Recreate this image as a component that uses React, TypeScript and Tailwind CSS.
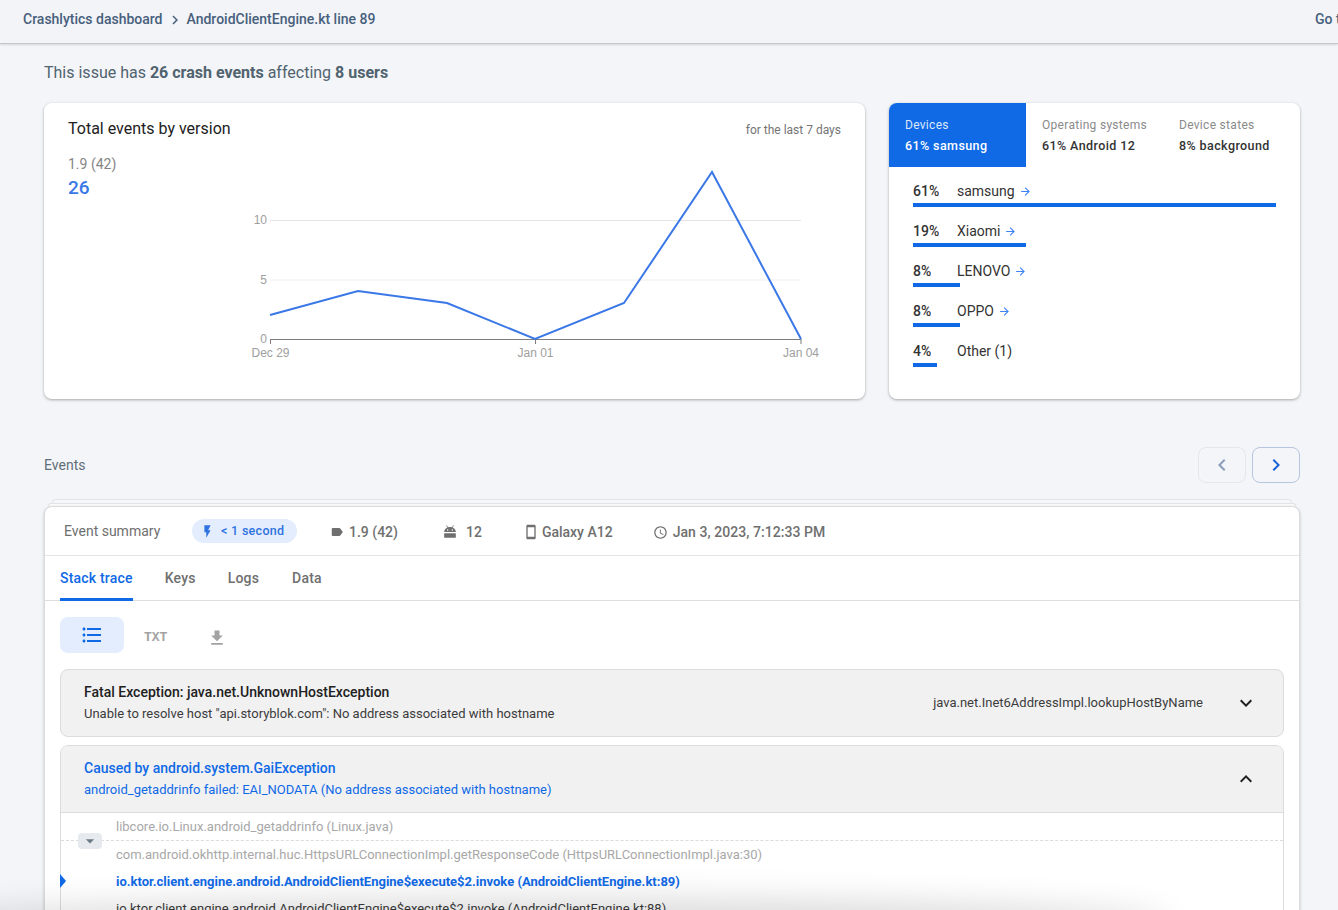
import {
  MdAccessTime,
  MdArrowDropDown,
  MdArrowForward,
  MdChevronLeft,
  MdChevronRight,
  MdExpandLess,
  MdExpandMore,
  MdFileDownload,
  MdFlashOn,
  MdFormatListBulleted,
  MdLabel,
  MdOutlineSmartphone,
} from "react-icons/md";

const deviceRows = [
  { pct: "61%", name: "samsung", width: "w-[363px]", link: true },
  { pct: "19%", name: "Xiaomi", width: "w-[113px]", link: true },
  { pct: "8%", name: "LENOVO", width: "w-[47px]", link: true },
  { pct: "8%", name: "OPPO", width: "w-[47px]", link: true },
  { pct: "4%", name: "Other (1)", width: "w-[24px]", link: false },
];

const points = "270,315 358,291 447,303 535,339 624,303 712,172 801,339";

const Chart = () => (
  <svg width="600" height="210" viewBox="230 160 600 210" className="block shrink-0">
    <line x1="270" x2="801" y1="220.5" y2="220.5" stroke="#e4e4e4" />
    <line x1="270" x2="801" y1="280" y2="280" stroke="#eeeeee" />
    <line x1="270" x2="801" y1="339.5" y2="339.5" stroke="#7d7d7d" />
    <line x1="270.5" x2="270.5" y1="339" y2="344" stroke="#7d7d7d" />
    <line x1="535.5" x2="535.5" y1="339" y2="344" stroke="#7d7d7d" />
    <line x1="801" x2="801" y1="339" y2="344" stroke="#7d7d7d" />
    <polyline points={points} fill="none" stroke="#3b78e7" strokeWidth="2" />
    <g fontSize="12" fill="#9e9e9e" fontFamily="'Liberation Sans', sans-serif">
      <text x="267" y="224" textAnchor="end">10</text>
      <text x="267" y="284" textAnchor="end">5</text>
      <text x="267" y="343" textAnchor="end">0</text>
      <text x="270.5" y="357" textAnchor="middle">Dec 29</text>
      <text x="535.5" y="357" textAnchor="middle">Jan 01</text>
      <text x="801" y="357" textAnchor="middle">Jan 04</text>
    </g>
  </svg>
);

const AndroidIcon = () => (
  <svg width="14" height="14" viewBox="0 0 24 24" className="mr-[9px]" fill="currentColor">
    <path d="M2 12a10 8.5 0 0 1 20 0z" />
    <path d="M6 1l3 4M18 1l-3 4" stroke="currentColor" strokeWidth="1.6" />
    <circle cx="8" cy="8.5" r="1.3" fill="#fff" />
    <circle cx="16" cy="8.5" r="1.3" fill="#fff" />
    <rect x="2" y="14" width="20" height="8" rx="1" />
  </svg>
);

const DeviceTab = ({ label, value, active }: { label: string; value: string; active?: boolean }) => (
  <div className={`w-[137px] h-16 pl-4 pt-[15px] ${active ? "bg-[#1069e5] text-white" : "text-[#333]"}`}>
    <div className={`text-[12px] leading-[15px] tracking-[0.3px] ${active ? "text-[#dbe8fb]" : "text-[#8a8a8a]"}`}>{label}</div>
    <div className="mt-[5px] text-[12.5px] leading-[16px] font-medium tracking-[0.4px]">{value}</div>
  </div>
);

const Meta = ({ icon, text, className }: { icon: React.ReactNode; text: string; className: string }) => (
  <div className={`flex items-center pt-[2px] text-[14px] text-[#6f6f6f] font-medium ${className}`}>
    {icon}
    <span>{text}</span>
  </div>
);

const StackLine = ({ text, className }: { text: string; className: string }) => (
  <div className={`pl-[55px] text-[13px] whitespace-nowrap ${className}`}>{text}</div>
);

export default function App() {
  return (
    <div className="relative h-[910px] w-[1338px] overflow-hidden bg-[#f4f5f8] font-['Roboto',sans-serif]">
      <header className="flex h-[44px] items-center justify-between border-b border-[#c4c6ca] bg-[#f3f4f7] pb-[4px] pl-[23px] shadow-[0_1px_2px_rgba(0,0,0,0.12)]">
        <div className="flex items-center text-[14px] font-medium text-[#47607c]">
          <span>Crashlytics dashboard</span>
          <MdChevronRight className="mx-[3px] text-[#47607c]" size={18} />
          <span>AndroidClientEngine.kt line 89</span>
        </div>
        <span className="w-[23px] overflow-hidden whitespace-nowrap text-[14px] font-medium text-[#47607c]">Go to</span>
      </header>

      <main className="pl-[44px] pr-[38px]">
        <p className="mt-[19px] text-[16px] leading-[20px] text-[#50636f]">
          This issue has <b className="font-bold">26 crash events</b> affecting <b className="font-bold">8 users</b>
        </p>

        <section className="mt-[20px] flex gap-[24px]">
          <div className="h-[296px] w-[821px] rounded-lg bg-white pl-6 pr-6 shadow-[0_1px_3px_rgba(0,0,0,0.32)]">
            <div className="flex items-center justify-between pt-[16px]">
              <span className="text-[16px] leading-[20px] text-[#212121]">Total events by version</span>
              <span className="pt-[2px] text-[12px] text-[#757575]">for the last 7 days</span>
            </div>
            <div className="flex">
              <div className="w-[162px] pt-[16px]">
                <div className="text-[14px] leading-[18px] text-[#858585]">1.9 (42)</div>
                <div className="mt-[2px] text-[19px] font-medium leading-[26px] text-[#3b78e7]">26</div>
              </div>
              <div className="mt-[21px]">
                <Chart />
              </div>
            </div>
          </div>

          <div className="h-[296px] w-[411px] overflow-hidden rounded-lg bg-white shadow-[0_1px_3px_rgba(0,0,0,0.32)]">
            <div className="flex">
              <DeviceTab label="Devices" value="61% samsung" active />
              <DeviceTab label="Operating systems" value="61% Android 12" />
              <DeviceTab label="Device states" value="8% background" />
            </div>
            <div className="px-6 pt-[13px]">
              {deviceRows.map((row) => (
                <div key={row.pct + row.name} className="mb-[14px] h-[26px]">
                  <div className="flex h-[23px] items-center text-[14px] text-[#333]">
                    <span className="w-[44px] font-medium">{row.pct}</span>
                    <span>{row.name}</span>
                    {row.link && <MdArrowForward className="ml-[4px] text-[#3b82f6]" size={13} />}
                  </div>
                  <div className={`h-1 bg-[#1069e5] ${row.width}`} />
                </div>
              ))}
            </div>
          </div>
        </section>

        <section className="mt-[48px] flex h-[36px] items-center justify-between">
          <span className="text-[14px] text-[#5f6f7a]">Events</span>
          <div className="flex gap-[6px]">
            <button className="flex h-[36px] w-[48px] items-center justify-center rounded-lg border border-[#e3e6ec] text-[#8a9db8]">
              <MdChevronLeft size={24} />
            </button>
            <button className="flex h-[36px] w-[48px] items-center justify-center rounded-lg border border-[#b6c6de] text-[#1a62d6]">
              <MdChevronRight size={24} />
            </button>
          </div>
        </section>

        <section className="mt-[16px]">
          <div className="mx-[8px] h-[4px] rounded-t-lg border border-b-0 border-[#e2e3e6] bg-[#f7f7f9]" />
          <div className="mx-[4px] h-[3px] rounded-t-lg border border-b-0 border-[#e2e3e6] bg-[#fbfbfc]" />
          <div className="h-[500px] rounded-t-lg border border-[#dcdcdc] bg-white shadow-[0_1px_3px_rgba(0,0,0,0.22)]">
            <div className="flex h-[49px] items-center border-b border-[#e4e4e4] pl-[19px]">
              <span className="w-[128px] text-[14px] text-[#6f6f6f]">Event summary</span>
              <div className="flex h-6 w-[105px] items-center rounded-full bg-[#e3edfd] pl-[8px] text-[12.5px] font-medium tracking-[0.3px] text-[#2f73e0]">
                <MdFlashOn size={15} />
                <span className="ml-[6px]">&lt; 1 second</span>
              </div>
              <Meta className="ml-[33px]" text="1.9 (42)" icon={<MdLabel className="mr-[5px]" size={14} />} />
              <Meta className="ml-[45px]" text="12" icon={<AndroidIcon />} />
              <Meta className="ml-[41px]" text="Galaxy A12" icon={<MdOutlineSmartphone className="mr-[3px]" size={16} />} />
              <Meta className="ml-[40px] tracking-[0.05px]" text="Jan 3, 2023, 7:12:33 PM" icon={<MdAccessTime className="mr-[5px]" size={15} />} />
            </div>

            <div className="flex h-[45px] gap-[32px] border-b border-[#dedede] pl-[15px] text-[14px] font-medium tracking-[0.2px] text-[#6f6f6f]">
              <div className="flex h-[45px] items-center border-b-[3px] border-[#1069e5] pt-[2px] text-[#1069e5]">Stack trace</div>
              <div className="flex h-[45px] items-center pb-[1px]">Keys</div>
              <div className="flex h-[45px] items-center pb-[1px]">Logs</div>
              <div className="flex h-[45px] items-center pb-[1px] pl-[1px]">Data</div>
            </div>

            <div className="flex h-[68px] items-center pl-[15px]">
              <div className="flex h-9 w-16 items-center justify-center rounded-lg bg-[#e3edfd] text-[#1069e5]">
                <MdFormatListBulleted size={24} />
              </div>
              <span className="ml-[20px] mt-[6px] font-['Liberation_Mono',monospace] text-[13px] font-bold text-[#a3a3a3]">TXT</span>
              <MdFileDownload className="ml-[40px] mt-[6px] text-[#a3a3a3]" size={20} />
            </div>

            <div className="mx-[15px]">
              <div className="flex h-[68px] items-center rounded-lg border border-[#dcdcdc] bg-[#f1f1f2] pl-[23px] pr-[25px]">
                <div className="flex-1">
                  <div className="-mt-[2px] text-[14px] font-medium leading-[20px] text-[#212121]">Fatal Exception: java.net.UnknownHostException</div>
                  <div className="mt-[3px] text-[13px] leading-[18px] text-[#3c3c3c]">Unable to resolve host "api.storyblok.com": No address associated with hostname</div>
                </div>
                <span className="mr-[31px] text-[13px] text-[#3c3c3c]">java.net.Inet6AddressImpl.lookupHostByName</span>
                <MdExpandMore className="text-[#212121]" size={24} />
              </div>

              <div className="mt-2 h-[200px] rounded-t-lg border border-[#dcdcdc]">
                <div className="flex h-[67px] items-center rounded-t-lg border-b border-[#dcdcdc] bg-[#f1f1f2] pl-[23px] pr-[25px]">
                  <div className="flex-1 text-[#1069e5]">
                    <div className="-mt-[2px] text-[14px] font-medium leading-[20px]">Caused by android.system.GaiException</div>
                    <div className="mt-[3px] text-[13px] leading-[18px]">android_getaddrinfo failed: EAI_NODATA (No address associated with hostname)</div>
                  </div>
                  <MdExpandLess className="text-[#212121]" size={24} />
                </div>
                <div className="relative">
                  <StackLine text="libcore.io.Linux.android_getaddrinfo (Linux.java)" className="h-[28px] border-b border-dashed border-[#dcdcdc] pt-[4px] text-[#a8a8a8]" />
                  <div className="absolute left-[17px] top-[20px] flex h-4 w-6 items-center justify-center rounded bg-[#e6eaee] text-[#6b7c88]">
                    <MdArrowDropDown size={20} />
                  </div>
                  <StackLine text="com.android.okhttp.internal.huc.HttpsURLConnectionImpl.getResponseCode (HttpsURLConnectionImpl.java:30)" className="h-[27px] pt-[4px] text-[#a8a8a8]" />
                  <div className="absolute -left-[1px] top-[61px] h-0 w-0 border-y-[7px] border-l-[6px] border-y-transparent border-l-[#1069e5]" />
                  <StackLine text="io.ktor.client.engine.android.AndroidClientEngine$execute$2.invoke (AndroidClientEngine.kt:89)" className="h-[27px] pt-[4px] font-bold text-[#1069e5]" />
                  <StackLine text="io.ktor.client.engine.android.AndroidClientEngine$execute$2.invoke (AndroidClientEngine.kt:88)" className="pt-[4px] text-[#3c3c3c]" />
                </div>
              </div>
            </div>
          </div>
        </section>
      </main>

      <div className="absolute -bottom-[24px] -left-[60px] h-[24px] w-[1220px] rounded-[50%] bg-black/20 shadow-[0_0_32px_12px_rgba(0,0,0,0.14)]" />
    </div>
  );
}
